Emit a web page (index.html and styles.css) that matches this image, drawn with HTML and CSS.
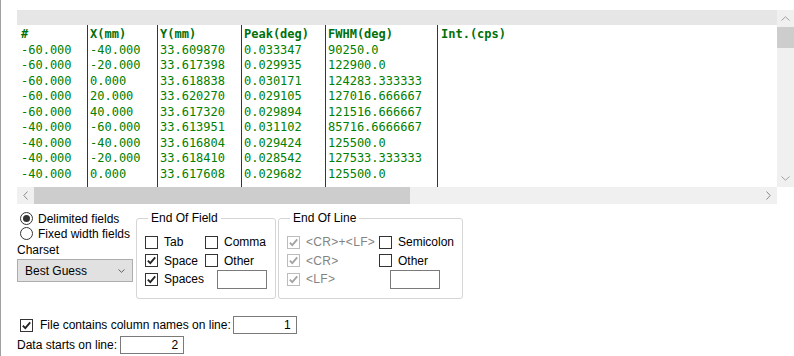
FILE: index.html
```html
<!DOCTYPE html>
<html lang="en">
<head>
    <meta charset="UTF-8">
    <title>Import Text Data</title>
    <link rel="stylesheet" href="styles.css">
</head>
<body>
    <div class="viewer">
        <div class="sheet">
            <div class="sheet-head"></div>
            <div class="sheet-cols">
                <div class="col c1">
                    <div class="cell head">#</div>
                    <div class="cell">-60.000</div>
                    <div class="cell">-60.000</div>
                    <div class="cell">-60.000</div>
                    <div class="cell">-60.000</div>
                    <div class="cell">-60.000</div>
                    <div class="cell">-40.000</div>
                    <div class="cell">-40.000</div>
                    <div class="cell">-40.000</div>
                    <div class="cell">-40.000</div>
                </div>
                <div class="col c2">
                    <div class="cell head">X(mm)</div>
                    <div class="cell">-40.000</div>
                    <div class="cell">-20.000</div>
                    <div class="cell">0.000</div>
                    <div class="cell">20.000</div>
                    <div class="cell">40.000</div>
                    <div class="cell">-60.000</div>
                    <div class="cell">-40.000</div>
                    <div class="cell">-20.000</div>
                    <div class="cell">0.000</div>
                </div>
                <div class="col c3">
                    <div class="cell head">Y(mm)</div>
                    <div class="cell">33.609870</div>
                    <div class="cell">33.617398</div>
                    <div class="cell">33.618838</div>
                    <div class="cell">33.620270</div>
                    <div class="cell">33.617320</div>
                    <div class="cell">33.613951</div>
                    <div class="cell">33.616804</div>
                    <div class="cell">33.618410</div>
                    <div class="cell">33.617608</div>
                </div>
                <div class="col c4">
                    <div class="cell head">Peak(deg)</div>
                    <div class="cell">0.033347</div>
                    <div class="cell">0.029935</div>
                    <div class="cell">0.030171</div>
                    <div class="cell">0.029105</div>
                    <div class="cell">0.029894</div>
                    <div class="cell">0.031102</div>
                    <div class="cell">0.029424</div>
                    <div class="cell">0.028542</div>
                    <div class="cell">0.029682</div>
                </div>
                <div class="col c5">
                    <div class="cell head">FWHM(deg)</div>
                    <div class="cell">90250.0</div>
                    <div class="cell">122900.0</div>
                    <div class="cell">124283.333333</div>
                    <div class="cell">127016.666667</div>
                    <div class="cell">121516.666667</div>
                    <div class="cell">85716.6666667</div>
                    <div class="cell">125500.0</div>
                    <div class="cell">127533.333333</div>
                    <div class="cell">125500.0</div>
                </div>
                <div class="col c6">
                    <div class="cell head">Int.(cps)</div>
                </div>
            </div>
        </div>

        <div class="vscroll">
            <div class="sb-btn">
                <svg width="9" height="5" viewBox="0 0 9 5"><polyline points="0.5,4.5 4.5,0.8 8.5,4.5" /></svg>
            </div>
            <div class="vthumb"></div>
            <div class="sb-track"></div>
            <div class="sb-btn">
                <svg width="9" height="5" viewBox="0 0 9 5"><polyline points="0.5,0.5 4.5,4.2 8.5,0.5" /></svg>
            </div>
        </div>

        <div class="hscroll">
            <div class="sb-btn">
                <svg width="5" height="9" viewBox="0 0 5 9"><polyline points="4.5,0.5 0.8,4.5 4.5,8.5" /></svg>
            </div>
            <div class="hthumb"></div>
            <div class="sb-track"></div>
            <div class="sb-btn">
                <svg width="5" height="9" viewBox="0 0 5 9"><polyline points="0.5,0.5 4.2,4.5 0.5,8.5" /></svg>
            </div>
        </div>

        <div class="corner"></div>
    </div>

    <div class="form">
        <div class="options">
            <div class="format">
                <label class="radio-row"><span class="radio on"></span>Delimited fields</label>
                <label class="radio-row"><span class="radio"></span>Fixed width fields</label>
                <div class="charset-label">Charset</div>
                <div class="select">
                    <span>Best Guess</span>
                    <svg width="7" height="4" viewBox="0 0 7 4"><polyline points="0.5,0.5 3.5,3.3 6.5,0.5" /></svg>
                </div>
            </div>

            <fieldset class="group field-group">
                <legend>End Of Field</legend>
                <div class="checks">
                    <label class="check-row"><span class="box"></span>Tab</label>
                    <label class="check-row"><span class="box"></span>Comma</label>
                    <label class="check-row"><span class="box on"><svg width="11" height="11" viewBox="0 0 11 11"><polyline points="1.8,5.6 4.3,8.2 9.2,2.4" /></svg></span>Space</label>
                    <label class="check-row"><span class="box"></span>Other</label>
                    <label class="check-row"><span class="box on"><svg width="11" height="11" viewBox="0 0 11 11"><polyline points="1.8,5.6 4.3,8.2 9.2,2.4" /></svg></span>Spaces</label>
                    <div class="check-row"><input class="edit small" type="text"></div>
                </div>
            </fieldset>

            <fieldset class="group line-group">
                <legend>End Of Line</legend>
                <div class="checks">
                    <label class="check-row disabled"><span class="box on"><svg width="11" height="11" viewBox="0 0 11 11"><polyline points="1.8,5.6 4.3,8.2 9.2,2.4" /></svg></span>&lt;CR&gt;+&lt;LF&gt;</label>
                    <label class="check-row"><span class="box"></span>Semicolon</label>
                    <label class="check-row disabled"><span class="box on"><svg width="11" height="11" viewBox="0 0 11 11"><polyline points="1.8,5.6 4.3,8.2 9.2,2.4" /></svg></span>&lt;CR&gt;</label>
                    <label class="check-row"><span class="box"></span>Other</label>
                    <label class="check-row disabled"><span class="box on"><svg width="11" height="11" viewBox="0 0 11 11"><polyline points="1.8,5.6 4.3,8.2 9.2,2.4" /></svg></span>&lt;LF&gt;</label>
                    <div class="check-row"><input class="edit small" type="text"></div>
                </div>
            </fieldset>
        </div>

        <div class="line-row names-row">
            <span class="box on"><svg width="11" height="11" viewBox="0 0 11 11"><polyline points="1.8,5.6 4.3,8.2 9.2,2.4" /></svg></span>
            <label>File contains column names on line:</label>
            <input class="edit num" type="text" value="1">
        </div>
        <div class="line-row start-row">
            <label>Data starts on line:</label>
            <input class="edit num" type="text" value="2">
        </div>
    </div>
</body>
</html>
```

FILE: styles.css
```css
:root {
    --grid-line: #2a2a8c;
    --data-green: #008000;
    --scroll-bg: #f0f0f0;
    --scroll-thumb: #cdcdcd;
    --arrow: #a0a0a0;
    --group-border: #d5d5d5;
}

* {
    box-sizing: border-box;
}

body {
    margin: 0;
    height: 356px;
    border-left: 1px solid #a0a0a0;
    background: #ffffff;
    color: #000000;
    font-family: "Liberation Sans", Arial, sans-serif;
    font-size: 12px;
    overflow: hidden;
}

/* ---- data preview ---- */

.viewer {
    display: grid;
    grid-template-columns: 1fr 17px;
    grid-template-rows: 177px 17px;
    margin: 10px 0 0 16px;
}

.sheet {
    display: flex;
    flex-direction: column;
    overflow: hidden;
}

.sheet-head {
    height: 15px;
    background: #e6e6e6;
}

.sheet-cols {
    flex: 1;
    display: flex;
}

.col {
    border-left: 1px solid var(--grid-line);
    padding: 2px 0 0 2px;
    font-family: "DejaVu Sans Mono", "Liberation Mono", monospace;
    font-size: 12px;
    color: var(--data-green);
    white-space: nowrap;
}

.c1 { width: 70px; border-left: none; padding-left: 4px; }
.c2 { width: 70px; }
.c3 { width: 84px; }
.c4 { width: 84px; }
.c5 { width: 112px; }
.c6 { flex: 1; padding-left: 3px; }

.cell {
    height: 15.55px;
    line-height: 15.55px;
}

.cell.head {
    font-weight: bold;
    color: #00700a;
}

.vscroll,
.hscroll {
    display: flex;
    background: var(--scroll-bg);
}

.vscroll {
    flex-direction: column;
}

.sb-btn {
    width: 17px;
    height: 17px;
    display: flex;
    align-items: center;
    justify-content: center;
}

.sb-btn svg polyline {
    fill: none;
    stroke: var(--arrow);
    stroke-width: 1;
}

.hscroll .sb-btn svg polyline {
    stroke: #8a8a8a;
}

.vthumb {
    height: 21px;
    background: var(--scroll-thumb);
}

.hthumb {
    width: 376px;
    background: var(--scroll-thumb);
}

.sb-track {
    flex: 1;
}

.corner {
    background: #ffffff;
}

/* ---- import options ---- */

.form {
    padding-left: 16px;
}

.options {
    display: flex;
    margin-top: 7px;
}

.format {
    width: 119px;
    display: flex;
    flex-direction: column;
}

.radio-row {
    display: flex;
    align-items: center;
    height: 15px;
    padding-left: 3px;
    gap: 5px;
}

.radio {
    width: 13px;
    height: 13px;
    border: 1px solid #333333;
    border-radius: 50%;
    display: flex;
    align-items: center;
    justify-content: center;
}

.radio.on::after {
    content: "";
    width: 7px;
    height: 7px;
    border-radius: 50%;
    background: #333333;
}

.charset-label {
    height: 15px;
    line-height: 15px;
    margin-top: 2px;
}

.select {
    display: flex;
    align-items: center;
    justify-content: space-between;
    width: 116px;
    height: 23px;
    margin-top: 1px;
    padding: 0 7px 0 7px;
    background: #e1e1e1;
    border: 1px solid #adadad;
}

.select svg polyline {
    fill: none;
    stroke: #606060;
    stroke-width: 1;
}

.group {
    margin: 0;
    padding: 8px 0 0 8px;
    border: 1px solid var(--group-border);
    border-radius: 3px;
    height: 88px;
}

.group legend {
    padding: 0 3px;
    margin-left: 3px;
    line-height: 14px;
}

.field-group {
    width: 140px;
}

.line-group {
    width: 185px;
    margin-left: 2px;
}

.checks {
    display: grid;
    grid-auto-rows: 18.5px;
}

.field-group .checks {
    grid-template-columns: 60px 1fr;
}

.line-group .checks {
    grid-template-columns: 92px 1fr;
}

.check-row {
    display: flex;
    align-items: center;
    gap: 6px;
}

.check-row.disabled {
    color: #838383;
    letter-spacing: 0.3px;
}

.box {
    width: 13px;
    height: 13px;
    flex: none;
    border: 1px solid #333333;
    background: #ffffff;
    display: flex;
    align-items: center;
    justify-content: center;
}

.box svg polyline {
    fill: none;
    stroke: #222222;
    stroke-width: 1.8;
}

.disabled .box {
    border-color: #bcbcbc;
}

.disabled .box svg polyline {
    stroke: #a3a3a3;
}

.edit {
    border: 1px solid #7a7a7a;
    background: #ffffff;
    font-family: "Liberation Sans", Arial, sans-serif;
    font-size: 12px;
    padding: 0 5px;
    margin: 0;
    outline: none;
}

.edit.small {
    width: 50px;
    height: 19px;
    margin-left: 12px;
}

.line-group .edit.small {
    margin-left: 11px;
}

.line-row {
    display: flex;
    align-items: center;
    height: 18px;
}

.names-row {
    margin-top: 17px;
    padding-left: 3px;
}

.names-row .box {
    margin-right: 7px;
}

.start-row {
    margin-top: 2px;
}

.edit.num {
    width: 64px;
    height: 18px;
    text-align: right;
}

.names-row .edit.num {
    margin-left: 2px;
}

.start-row .edit.num {
    margin-left: 3px;
}
```
